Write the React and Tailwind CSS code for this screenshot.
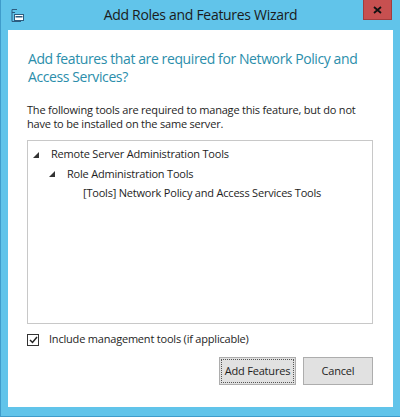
export default function App() {
  const font = { fontFamily: '"Open Sans", "Noto Sans", sans-serif' };
  return (
    <div className="w-[400px] h-[417px] bg-[#61c4ea] flex flex-col border-l border-b border-[#3f9ccb]" style={font}>
      <div className="h-[30px] flex items-start relative shrink-0">
        <div className="absolute left-[9px] top-[8px]">
          <svg width="15" height="15" viewBox="0 0 15 15">
            <path d="M2 1.5h5M2 1.5v12h9" stroke="#2d5d80" strokeWidth="1" fill="none" />
            <rect x="4.5" y="6.5" width="9" height="6" fill="#ffffff" stroke="#2d5d80" />
            <rect x="5.5" y="8" width="7" height="1.5" fill="#2d5d80" />
            <path d="M2 4.5h3" stroke="#2d5d80" />
          </svg>
        </div>
        <div className="flex-1 text-center text-[14px] tracking-[-0.3px] leading-[30px] text-[#1b1b1b]">Add Roles and Features Wizard</div>
        <div className="absolute right-[8px] top-0 w-[29px] h-[20px] bg-[#c75050] border border-t-0 border-[#a23c3c] flex items-center justify-center">
          <svg width="9" height="8" viewBox="0 0 9 8">
            <path d="M1 1L8 7M8 1L1 7" stroke="#111" strokeWidth="1.8" />
          </svg>
        </div>
      </div>
      <div className="flex-1 bg-white ml-[7px] mr-[7px] mb-[9px] pl-[19px] pr-[20px] pt-[20px] flex flex-col">
        <div className="text-[14px] tracking-[-0.4px] leading-[18px] text-[#2b8eab] pl-[1px]">
          Add features that are required for Network Policy and Access Services?
        </div>
        <div className="mt-[17px] text-[11px] tracking-[-0.2px] leading-[13.5px] text-[#1e1e1e]">
          The following tools are required to manage this feature, but do not have to be installed on the same server.
        </div>
        <div className="mt-[10px] h-[184px] border border-[#c8c8c8] pt-[4px] text-[11px] tracking-[-0.2px] text-[#1e1e1e]">
          <div className="flex items-center h-[19px] pl-[5px]">
            <Tri />
            <span className="ml-[12px]">Remote Server Administration Tools</span>
          </div>
          <div className="flex items-center h-[20px] pl-[21px]">
            <Tri />
            <span className="ml-[12px]">Role Administration Tools</span>
          </div>
          <div className="flex items-center h-[19px] pl-[55px]">
            <span>[Tools] Network Policy and Access Services Tools</span>
          </div>
        </div>
        <div className="mt-[9px] flex items-center h-[13px] text-[11px] tracking-[-0.2px] text-[#1e1e1e]">
          <div className="w-[12px] h-[12px] border border-[#333] bg-white flex items-center justify-center">
            <svg width="9" height="8" viewBox="0 0 9 8">
              <path d="M1 4L3.5 6.5L8 1" stroke="#222" strokeWidth="1.5" fill="none" />
            </svg>
          </div>
          <span className="ml-[10px]">Include management tools (if applicable)</span>
        </div>
        <div className="mt-[11px] flex justify-end gap-[7px]">
          <div className="w-[77px] h-[28px] bg-[#e1e1e1] border border-[#adadad] p-[1px]">
            <div className="w-full h-full border border-dotted border-[#555] flex items-center justify-center text-[11px] tracking-[-0.2px] text-[#1e1e1e]">Add Features</div>
          </div>
          <div className="w-[70px] h-[28px] bg-[#e1e1e1] border border-[#adadad] flex items-center justify-center text-[11px] tracking-[-0.2px] text-[#1e1e1e]">Cancel</div>
        </div>
      </div>
    </div>
  );
}

function Tri() {
  return (
    <svg width="6" height="6" viewBox="0 0 6 6">
      <path d="M6 0V6H0Z" fill="#333" />
    </svg>
  );
}
